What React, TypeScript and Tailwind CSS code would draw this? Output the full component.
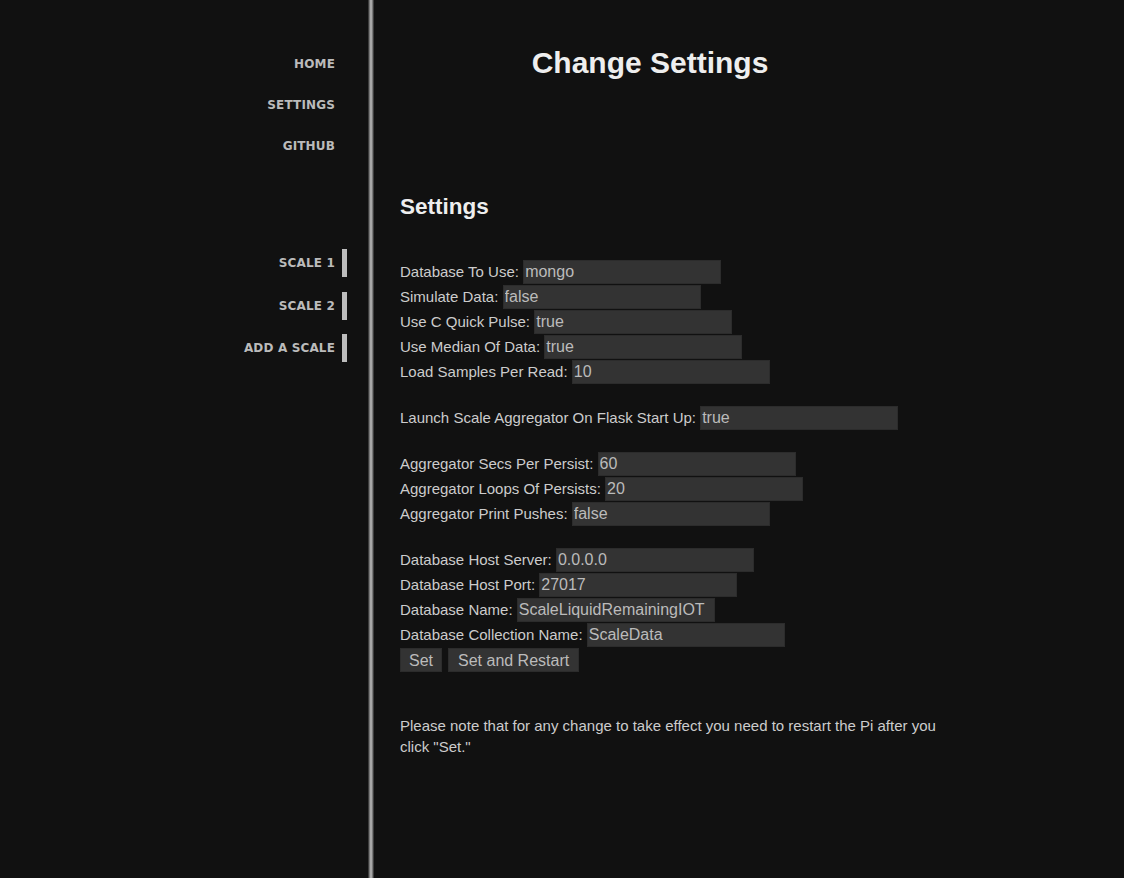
import React from "react";

const groups: { label: string; value: string }[][] = [
  [
    { label: "Database To Use:", value: "mongo" },
    { label: "Simulate Data:", value: "false" },
    { label: "Use C Quick Pulse:", value: "true" },
    { label: "Use Median Of Data:", value: "true" },
    { label: "Load Samples Per Read:", value: "10" },
  ],
  [{ label: "Launch Scale Aggregator On Flask Start Up:", value: "true" }],
  [
    { label: "Aggregator Secs Per Persist:", value: "60" },
    { label: "Aggregator Loops Of Persists:", value: "20" },
    { label: "Aggregator Print Pushes:", value: "false" },
  ],
  [
    { label: "Database Host Server:", value: "0.0.0.0" },
    { label: "Database Host Port:", value: "27017" },
    { label: "Database Name:", value: "ScaleLiquidRemainingIOT" },
    { label: "Database Collection Name:", value: "ScaleData" },
  ],
];

function Row({ label, value }: { label: string; value: string }) {
  return (
    <div className="flex items-center h-[25px]">
      <span className="text-[15px] text-[#cccccc] whitespace-pre">{label} </span>
      <input
        readOnly
        value={value}
        className="self-start h-[24px] w-[198px] bg-[#333333] border border-[#2c2c2c] px-[1px] text-[16px] text-[#bbbbbb] outline-none font-['Liberation_Sans',Arial,sans-serif]"
      />
    </div>
  );
}

export default function App() {
  return (
    <div className="flex min-h-[878px] bg-[#111111] font-['Liberation_Sans',Arial,sans-serif]">
      <aside className="w-[368px] shrink-0 flex flex-col items-end pr-[21px] pt-[43px] font-['DejaVu_Sans',Verdana,sans-serif] font-bold text-[12px] tracking-[0.15px] text-[#bbbbbb]">
        {["HOME", "SETTINGS", "GITHUB"].map((t) => (
          <div key={t} className="h-[41px] flex items-center mr-[12px]">
            {t}
          </div>
        ))}
        <div className="h-[76px]" />
        {["SCALE 1", "SCALE 2", "ADD A SCALE"].map((t, i) => (
          <div
            key={t}
            className={`flex items-center gap-[7px] ${i === 1 ? "h-[43px]" : "h-[42px]"}`}
          >
            <span>{t}</span>
            <span className="block w-[5px] h-[28px] bg-[#bdbdbd]" />
          </div>
        ))}
      </aside>
      <div className="w-[6px] shrink-0 bg-[linear-gradient(to_right,#1c1c1c,#6a6a6a,#a8a8a8,#a8a8a8,#6a6a6a,#1c1c1c)]" />
      <main className="flex-1 pl-[26px] pt-[46px]">
        <h1 className="w-[500px] text-center text-[30px] leading-[34px] font-bold text-[#eeeeee]">
          Change Settings
        </h1>
        <h2 className="mt-[114px] text-[22.5px] leading-[26px] font-bold text-[#eeeeee]">
          Settings
        </h2>
        <div className="mt-[40px]">
          {groups.map((g, gi) => (
            <div key={gi} className={gi > 0 ? "mt-[21px]" : ""}>
              {g.map((r) => (
                <Row key={r.label} label={r.label} value={r.value} />
              ))}
            </div>
          ))}
          <div className="flex gap-[6px]">
            <button className="h-[24px] px-[8px] bg-[#333333] border border-[#2c2c2c] text-[16px] text-[#bbbbbb]">
              Set
            </button>
            <button className="h-[24px] px-[9px] bg-[#333333] border border-[#2c2c2c] text-[16px] text-[#bbbbbb]">
              Set and Restart
            </button>
          </div>
        </div>
        <p className="mt-[43px] w-[550px] text-[15px] leading-[21px] text-[#cccccc]">
          Please note that for any change to take effect you need to restart the Pi after you click "Set."
        </p>
      </main>
    </div>
  );
}
